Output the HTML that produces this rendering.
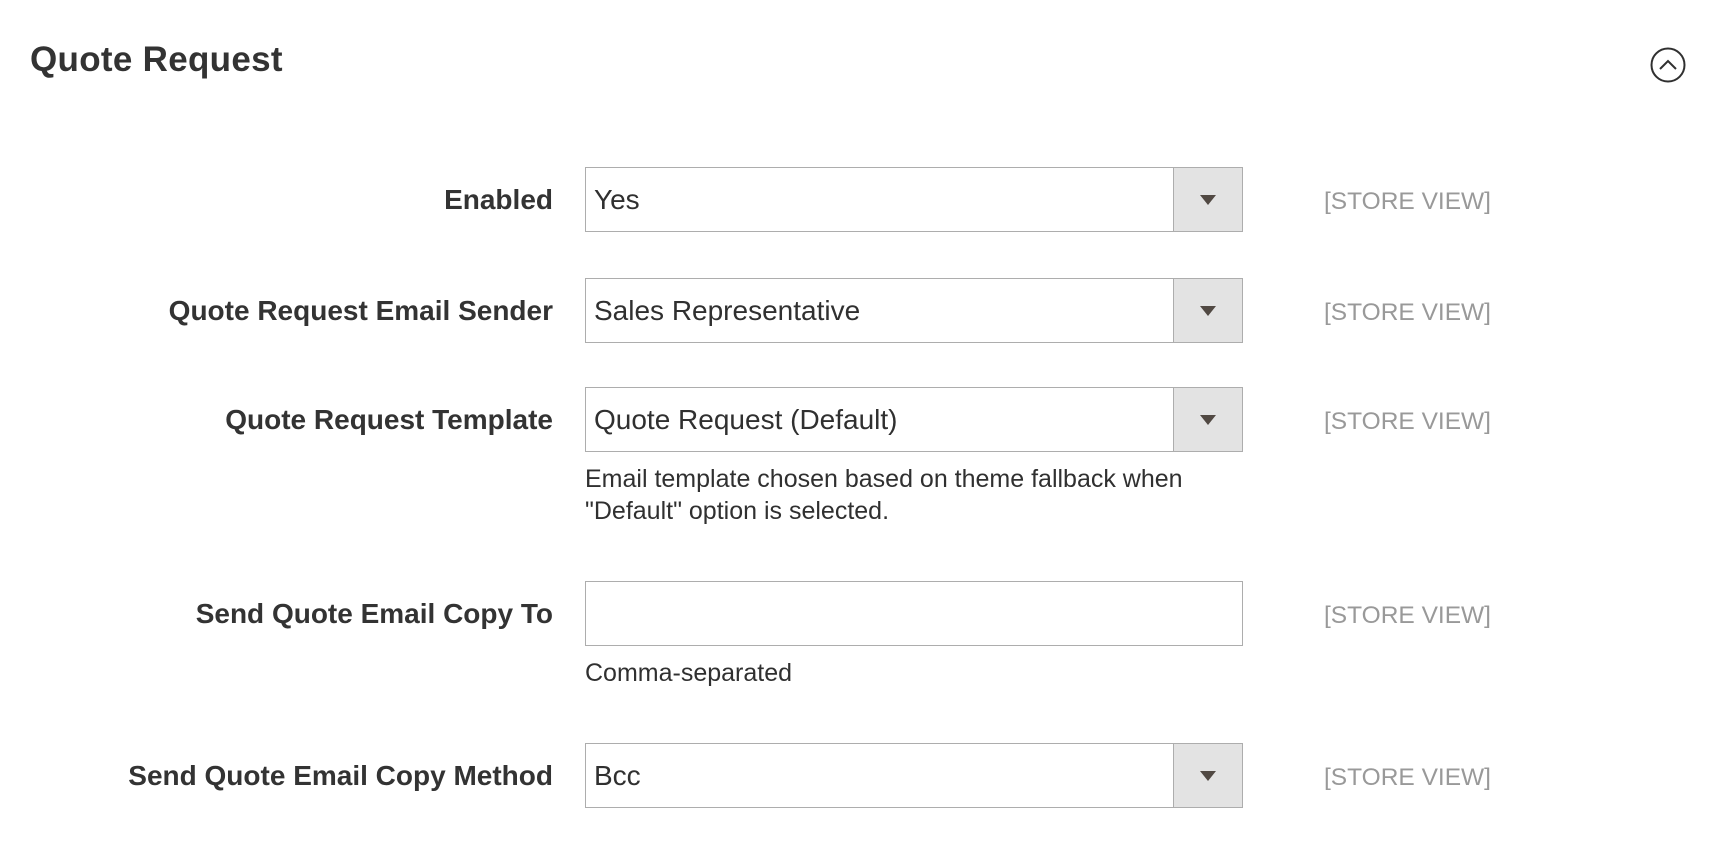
<!DOCTYPE html>
<html><head><meta charset="utf-8"><style>
body{margin:0;background:#fff;width:1718px;height:846px;overflow:hidden;font-family:"Liberation Sans",sans-serif;color:#303030;position:relative}
.t{position:absolute;left:30px;top:40px;font-size:35px;font-weight:bold;color:#333;letter-spacing:0.3px}
.lab{position:absolute;right:1165px;font-size:28px;font-weight:bold;color:#333;white-space:nowrap;line-height:65px}
.sel{position:absolute;left:585px;width:656px;height:63px;border:1px solid #adadad;background:#fff}
.sel span{position:absolute;left:8px;top:0;line-height:63px;font-size:28px;color:#303030}
.btn{position:absolute;right:0;top:0;width:68px;height:63px;background:#e3e3e3;border-left:1px solid #adadad}
.btn:after{content:"";position:absolute;left:26px;top:27px;border-left:8px solid transparent;border-right:8px solid transparent;border-top:10px solid #514943}
.sv{position:absolute;left:1324px;font-size:24.5px;color:#999;line-height:65px}
.note{position:absolute;left:585px;font-size:25px;color:#303030;line-height:32px}
</style></head><body>
<div class="t">Quote Request</div>
<svg style="position:absolute;left:1649px;top:46px" width="38" height="38" viewBox="0 0 38 38"><circle cx="19" cy="19" r="16.5" fill="none" stroke="#303030" stroke-width="2"/><path d="M11 23 L19 15 L27 23" fill="none" stroke="#303030" stroke-width="2"/></svg>

<div class="lab" style="top:167px">Enabled</div>
<div class="sel" style="top:167px"><span>Yes</span><div class="btn"></div></div>
<div class="sv" style="top:169px">[STORE VIEW]</div>

<div class="lab" style="top:278px">Quote Request Email Sender</div>
<div class="sel" style="top:278px"><span>Sales Representative</span><div class="btn"></div></div>
<div class="sv" style="top:280px">[STORE VIEW]</div>

<div class="lab" style="top:387px">Quote Request Template</div>
<div class="sel" style="top:387px"><span>Quote Request (Default)</span><div class="btn"></div></div>
<div class="sv" style="top:389px">[STORE VIEW]</div>
<div class="note" style="top:463px">Email template chosen based on theme fallback when<br>"Default" option is selected.</div>

<div class="lab" style="top:581px">Send Quote Email Copy To</div>
<div class="sel" style="top:581px"></div>
<div class="sv" style="top:583px">[STORE VIEW]</div>
<div class="note" style="top:657px">Comma-separated</div>

<div class="lab" style="top:743px">Send Quote Email Copy Method</div>
<div class="sel" style="top:743px"><span>Bcc</span><div class="btn"></div></div>
<div class="sv" style="top:745px">[STORE VIEW]</div>
</body></html>
